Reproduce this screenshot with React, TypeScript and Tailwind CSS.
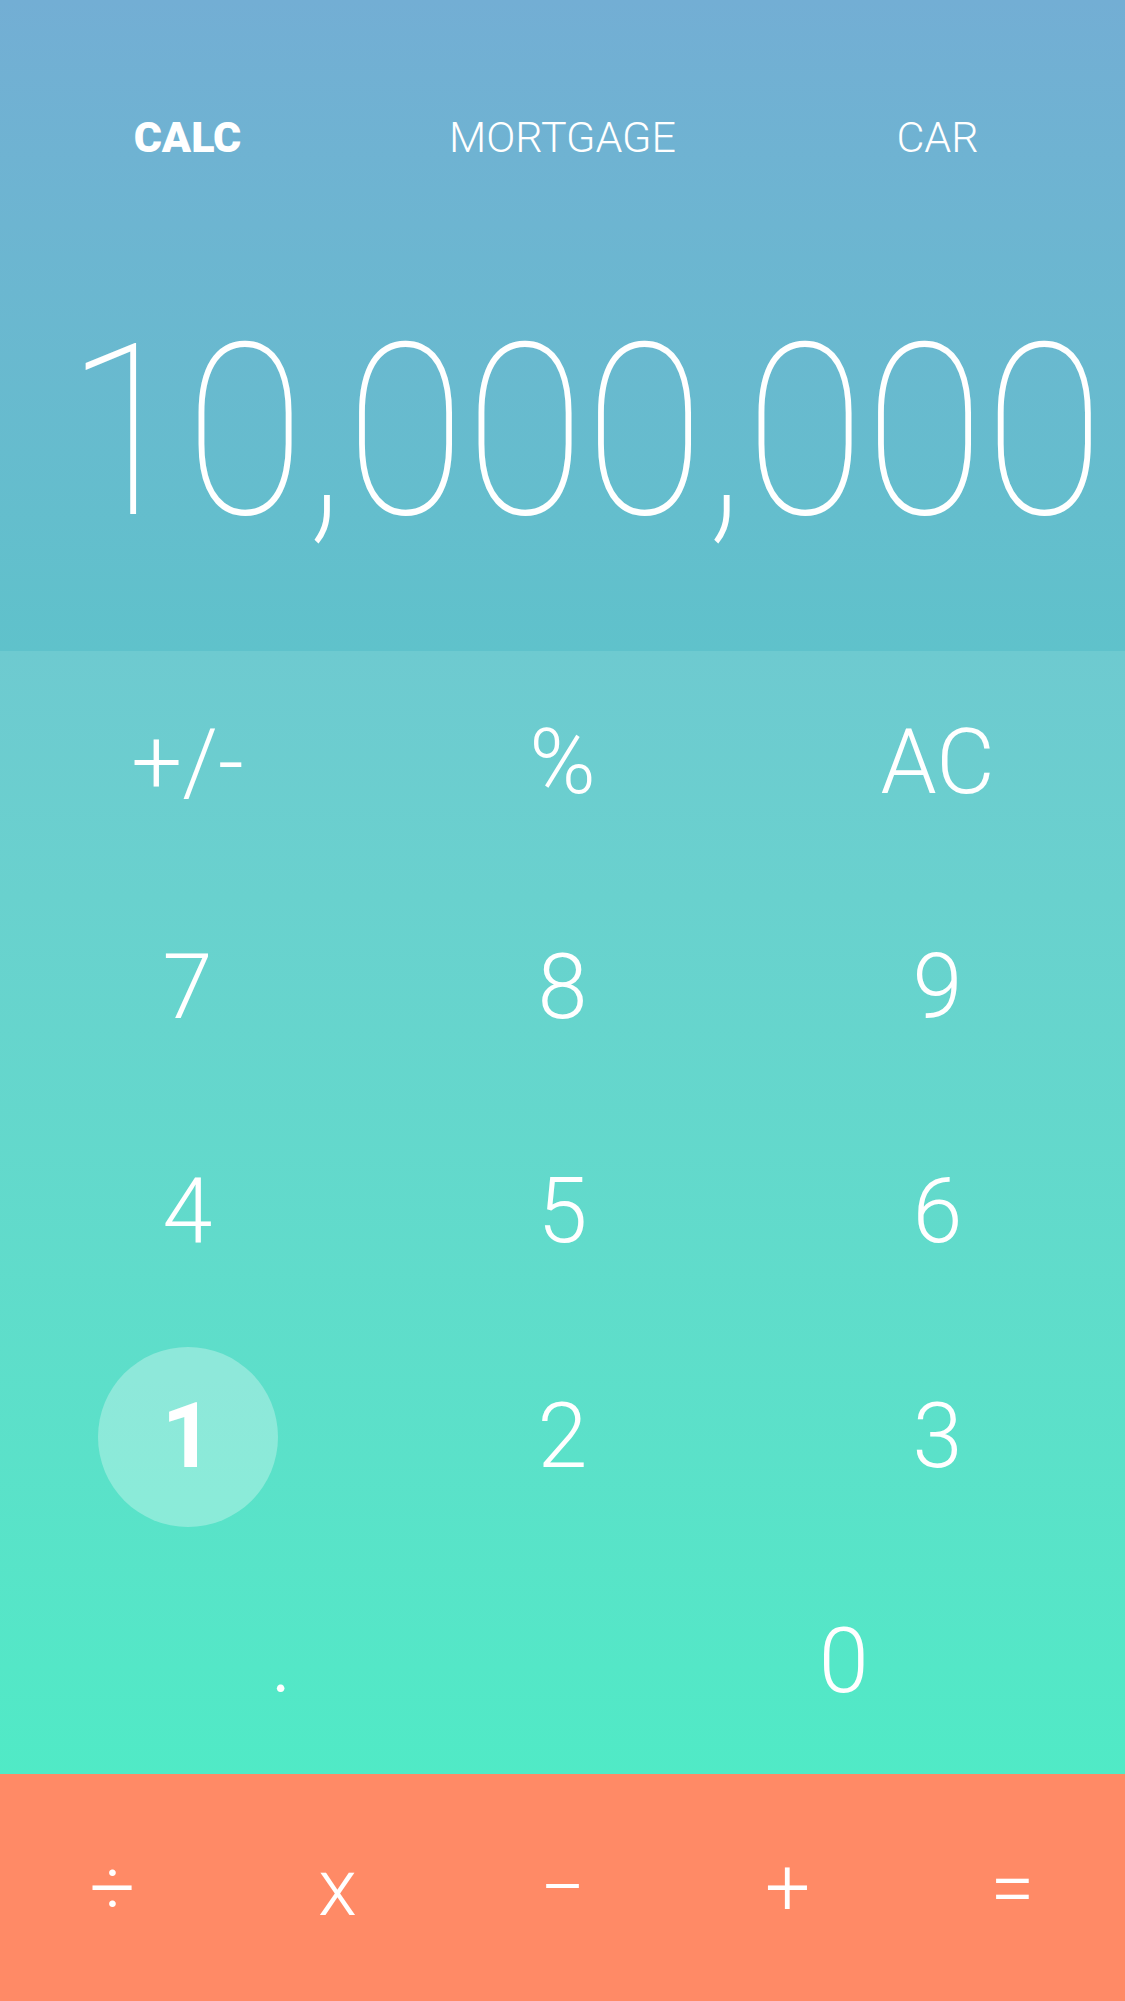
import React from 'react';

const tabs = [
  { label: 'CALC', active: true },
  { label: 'MORTGAGE', active: false },
  { label: 'CAR', active: false },
];

const keyRows = [
  ['+/-', '%', 'AC'],
  ['7', '8', '9'],
  ['4', '5', '6'],
  ['1', '2', '3'],
];

const ops = ['÷', 'x', '−', '+', '='];

const App = () => {
  const pressed = '1';

  return (
    <div className="w-[1125px] h-[2001px] flex flex-col text-white font-['Roboto','Inter',sans-serif] overflow-hidden">
      {/* Display */}
      <div className="h-[651px] flex flex-col bg-gradient-to-b from-[#73AED4] to-[#5FC2CB]">
        <nav className="grid grid-cols-3 pt-[116px]">
          {tabs.map((t) => (
            <div
              key={t.label}
              className={`text-center text-[43px] leading-none ${t.active ? 'font-black' : 'font-light'}`}
            >
              {t.label}
            </div>
          ))}
        </nav>
        <div className="mt-[154px] pr-[21px] flex justify-end text-[239px] leading-none font-thin whitespace-nowrap">
          <span className="shrink-0 origin-right scale-x-[0.914]">10,000,000</span>
        </div>
      </div>

      {/* Keypad */}
      <div className="h-[1123px] grid grid-rows-5 bg-gradient-to-b from-[#6ECAD0] to-[#50EAC6]">
        {keyRows.map((row, i) => (
          <div key={i} className="grid grid-cols-3">
            {row.map((k) => (
              <button key={k} className="flex items-center justify-center text-[90px] leading-none font-light">
                {k === pressed ? (
                  <span className="w-[180px] h-[180px] rounded-full bg-white/30 flex items-center justify-center font-bold">
                    {k}
                  </span>
                ) : (
                  k
                )}
              </button>
            ))}
          </div>
        ))}
        <div className="grid grid-cols-2">
          <button className="flex items-center justify-center text-[90px] leading-none font-light">.</button>
          <button className="flex items-center justify-center text-[90px] leading-none font-light">0</button>
        </div>
      </div>

      {/* Operators */}
      <div className="flex-1 grid grid-cols-5 bg-[#FF8A66]">
        {ops.map((o) => (
          <button key={o} className="flex items-center justify-center text-[80px] leading-none font-light">
            {o}
          </button>
        ))}
      </div>
    </div>
  );
};

export default App;
